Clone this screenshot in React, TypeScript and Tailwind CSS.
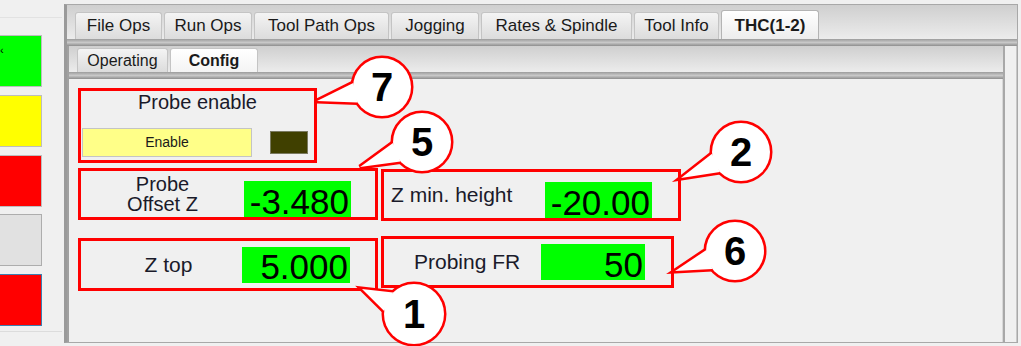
import React from "react";

const font = { fontFamily: '"Liberation Sans", Arial, sans-serif' };

function TopTab({ label, w, selected }: { label: string; w: number; selected?: boolean }) {
  return (
    <div
      style={{ width: w }}
      className={
        selected
          ? "h-[30px] -mb-[1px] flex items-center justify-center rounded-t-[3px] border border-b-0 border-[#b4b4b4] bg-gradient-to-b from-[#ffffff] to-[#ececec] text-[17px] font-bold text-[#1a1a1a] shrink-0"
          : "h-[27px] flex items-center justify-center rounded-t-[3px] border border-b-0 border-[#c4c4c4] bg-gradient-to-b from-[#f4f4f4] to-[#dcdcdc] text-[17px] text-[#1a1a1a] shrink-0"
      }
    >
      {label}
    </div>
  );
}

function Callout({ cx, cy, r, tx, ty, n }: { cx: number; cy: number; r: number; tx: number; ty: number; n: string }) {
  const ang = Math.atan2(ty - cy, tx - cx);
  const spread = 0.35;
  const p1x = cx + r * Math.cos(ang - spread);
  const p1y = cy + r * Math.sin(ang - spread);
  const p2x = cx + r * Math.cos(ang + spread);
  const p2y = cy + r * Math.sin(ang + spread);
  const wedge = `M${p1x},${p1y} L${tx},${ty} L${p2x},${p2y} Z`;
  return (
    <g>
      <circle cx={cx} cy={cy} r={r} fill="none" stroke="#ff0000" strokeWidth={5} />
      <path d={wedge} fill="none" stroke="#ff0000" strokeWidth={5} strokeLinejoin="miter" />
      <circle cx={cx} cy={cy} r={r} fill="#ffffff" />
      <path d={wedge} fill="#ffffff" />
      <text
        x={cx}
        y={cy + 14}
        textAnchor="middle"
        fontFamily='"Liberation Sans", Arial, sans-serif'
        fontWeight="bold"
        fontSize={40}
        fill="#000"
      >
        {n}
      </text>
    </g>
  );
}

function Green({ value, w }: { value: string; w: number }) {
  return (
    <div
      style={{ width: w }}
      className="h-[36px] bg-[#00ff00] flex items-center justify-end pr-[2px] text-[35px] leading-none text-black"
    >
      <span className="translate-y-[2px]">{value}</span>
    </div>
  );
}

export default function App() {
  return (
    <div style={font} className="relative w-[1021px] h-[346px] overflow-hidden bg-[#f0f0f0] flex">
      {/* left column */}
      <div className="w-[64px] shrink-0 flex flex-col">
        <div className="mt-[17px] h-[1px] w-[62px] bg-[#e2e2e2]" />
        <div className="mt-[17px] h-[52px] w-[42px] bg-[#00ff00] border border-l-0 border-[#bdbdbd] flex items-start">
          <span className="mt-[8px] text-[11px] leading-[12px] text-black">‹</span>
        </div>
        <div className="mt-[8px] h-[52px] w-[42px] bg-[#ffff00] border border-l-0 border-[#bdbdbd]" />
        <div className="mt-[8px] h-[52px] w-[42px] bg-[#ff0000] border border-l-0 border-[#bdbdbd]" />
        <div className="mt-[7px] h-[52px] w-[42px] bg-[#e1e1e1] border border-l-0 border-[#adadad]" />
        <div className="mt-[8px] h-[52px] w-[42px] bg-[#ff0000] border border-l-0 border-[#3c7fb1]" />
        <div className="mt-[5px] h-[1px] w-[62px] bg-[#dcdcdc]" />
      </div>

      {/* main tab panel */}
      <div className="mt-[4px] h-[339px] w-[954px] shrink-0 flex flex-col border border-[#a8a8a8] border-l-[3px] border-l-[#9a9a9a]">
        {/* top tab strip */}
        <div className="h-[34px] flex items-end gap-[2px] pl-[8px] bg-gradient-to-b from-[#cfcfcf] to-[#ececec] shrink-0">
          <TopTab label="File Ops" w={87} />
          <TopTab label="Run Ops" w={88} />
          <TopTab label="Tool Path Ops" w={135} />
          <TopTab label="Jogging" w={88} />
          <TopTab label="Rates & Spindle" w={151} />
          <TopTab label="Tool Info" w={85} />
          <TopTab label="THC(1-2)" w={98} selected />
        </div>
        <div className="h-[7px] shrink-0 bg-gradient-to-b from-[#9c9c9c] via-[#c8c8c8] to-[#8e8e8e]" />
        <div className="flex-1 flex">
          {/* sub panel */}
          <div className="w-[938px] shrink-0 flex flex-col border-r-[2px] border-[#a8a8a8] border-l-[2px] border-l-[#a0a0a0]">
            <div className="h-[26px] flex items-end pl-[8px] gap-[2px] bg-gradient-to-b from-[#cfcfcf] to-[#ececec] shrink-0">
              <div className="h-[24px] w-[91px] flex items-center justify-center rounded-t-[3px] border border-b-0 border-[#c4c4c4] bg-gradient-to-b from-[#f4f4f4] to-[#dcdcdc] text-[16px] text-[#1a1a1a]">
                Operating
              </div>
              <div className="h-[24px] w-[88px] flex items-center justify-center rounded-t-[3px] border border-b-0 border-[#c4c4c4] bg-gradient-to-b from-[#ffffff] to-[#f4f4f4] text-[16px] font-bold text-[#1a1a1a]">
                Config
              </div>
            </div>
            <div className="h-[7px] shrink-0 bg-gradient-to-b from-[#9c9c9c] via-[#c8c8c8] to-[#8e8e8e]" />
            {/* content */}
            <div className="flex-1 bg-[#f0f0f0] border-r border-[#d8d8d8] pl-[9px] pt-[9px] flex flex-col">
              {/* Probe enable */}
              <div className="w-[239px] h-[75px] border-[3px] border-[#ff0000] flex flex-col">
                <div className="text-[20px] text-[#1a1a2a] text-center leading-none mt-[1px]">Probe enable</div>
                <div className="mt-[16px] flex items-center">
                  <div className="ml-[1px] w-[170px] h-[29px] bg-[#ffff88] border border-[#c4c4c4] flex items-center justify-center text-[14px] text-[#1a1a1a]">
                    Enable
                  </div>
                  <div className="ml-[18px] w-[38px] h-[23px] bg-[#404000] border border-[#7a7a60]" />
                </div>
              </div>
              {/* row 2 */}
              <div className="mt-[5px] flex items-start gap-[3px]">
                <div className="w-[300px] h-[52px] border-[3px] border-[#ff0000] flex items-end">
                  <div className="w-[163px] self-center text-[20px] leading-[20px] text-[#1a1a2a] text-center">
                    <div>Probe</div>
                    <div>Offset Z</div>
                  </div>
                  <Green value="-3.480" w={107} />
                </div>
                <div className="mt-[1px] w-[300px] h-[52px] border-[3px] border-[#ff0000] flex items-end">
                  <div className="w-[161px] self-center pl-[7px] text-[21px] text-[#1a1a2a]">Z min. height</div>
                  <Green value="-20.00" w={107} />
                </div>
              </div>
              {/* row 3 */}
              <div className="mt-[15px] flex items-start gap-[3px]">
                <div className="mt-[2px] w-[300px] h-[53px] border-[3px] border-[#ff0000] flex items-center">
                  <div className="w-[161px] text-[21px] text-[#1a1a2a] text-center pl-[14px]">Z top</div>
                  <Green value="5.000" w={108} />
                </div>
                <div className="w-[293px] h-[52px] border-[3px] border-[#ff0000] flex items-center">
                  <div className="w-[157px] pl-[30px] text-[21px] text-[#1a1a2a]">Probing FR</div>
                  <Green value="50" w={104} />
                </div>
              </div>
            </div>
          </div>
          <div className="flex-1 bg-[#f0f0f0] border-r border-[#c8c8c8]" />
        </div>
      </div>

      {/* callouts overlay */}
      <svg className="absolute left-0 top-0 pointer-events-none" width={1021} height={346}>
        <Callout cx={382} cy={87} r={29} tx={317} ty={101} n="7" />
        <Callout cx={422} cy={142} r={29} tx={360} ty={167} n="5" />
        <Callout cx={741} cy={152} r={29} tx={681} ty={178} n="2" />
        <Callout cx={735} cy={251} r={29} tx={675} ty={271} n="6" />
        <Callout cx={414} cy={314} r={30} tx={362} ty={289} n="1" />
      </svg>
    </div>
  );
}
